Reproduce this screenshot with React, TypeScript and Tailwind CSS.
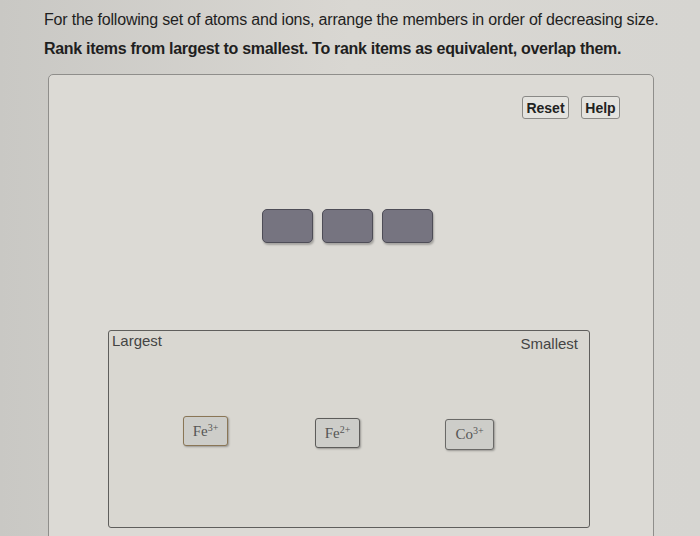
export default function App() {
  const chips = [
    { base: "Fe", sup: "3+", cls: "ml-[74px] w-[45px] mt-0 border-[#8a7656]" },
    { base: "Fe", sup: "2+", cls: "ml-[87px] w-[45px] mt-[2px] border-[#5d5c5a]" },
    { base: "Co", sup: "3+", cls: "ml-[85px] w-[49px] mt-[3px] h-[31px] border-[#6a6967]" },
  ];

  return (
    <div className="w-[700px] h-[536px] overflow-hidden bg-gradient-to-r from-[#c9c8c4] via-[#d9d7d2] to-[#d6d5d1] font-['Liberation_Sans',Arial,sans-serif] text-[#1f1f1f]">
      <div className="pl-[44px] pt-[10px]">
        <p className="text-[16px] leading-[20px] tracking-[-0.2px]">
          For the following set of atoms and ions, arrange the members in order of decreasing size.
        </p>
        <p className="mt-[9px] text-[16px] font-bold leading-[20px] tracking-[-0.3px]">
          Rank items from largest to smallest. To rank items as equivalent, overlap them.
        </p>
      </div>

      <div className="ml-[48px] mr-[46px] mt-[15px] h-[480px] rounded-[5px] border border-[#8f8e8b] bg-[#dcdad5]">
        <div className="flex justify-end gap-[12px] pt-[21px] pr-[33px]">
          <button className="h-[23px] w-[47px] rounded-[3px] border border-[#8a8986] bg-[#e4e3df] text-[14px] font-bold leading-none text-[#222]">
            Reset
          </button>
          <button className="h-[23px] w-[39px] rounded-[3px] border border-[#8a8986] bg-[#e4e3df] text-[14px] font-bold leading-none text-[#222]">
            Help
          </button>
        </div>

        <div className="mt-[90px] flex gap-[9px] pl-[213px]">
          {[0, 1, 2].map((i) => (
            <div
              key={i}
              className="h-[34px] w-[51px] rounded-[5px] border-[1.5px] border-[#4e4d57] bg-[#767480] shadow-[1px_2px_2px_rgba(0,0,0,0.25)]"
            />
          ))}
        </div>

        <div className="ml-[59px] mr-[63px] mt-[87px] h-[198px] rounded-[3px] border-[1.5px] border-[#5f5e5c] bg-[#d9d7d1]">
          <div className="flex justify-between px-[3px] pt-[1px] text-[15px] leading-[18px] text-[#444]">
            <span>Largest</span>
            <span className="mt-[3px] mr-[8px]">Smallest</span>
          </div>
          <div className="mt-[63px] flex items-start">
            {chips.map((c, i) => (
              <div
                key={i}
                className={`${c.cls} flex h-[30px] items-center justify-center rounded-[3px] border-[1.5px] bg-[#cdcdc9] shadow-[1px_1px_2px_rgba(0,0,0,0.3)] font-['Liberation_Serif','Times_New_Roman',serif] text-[15px] text-[#555]`}
              >
                <span>
                  {c.base}
                  <sup className="text-[10px]">{c.sup}</sup>
                </span>
              </div>
            ))}
          </div>
        </div>
      </div>
    </div>
  );
}
